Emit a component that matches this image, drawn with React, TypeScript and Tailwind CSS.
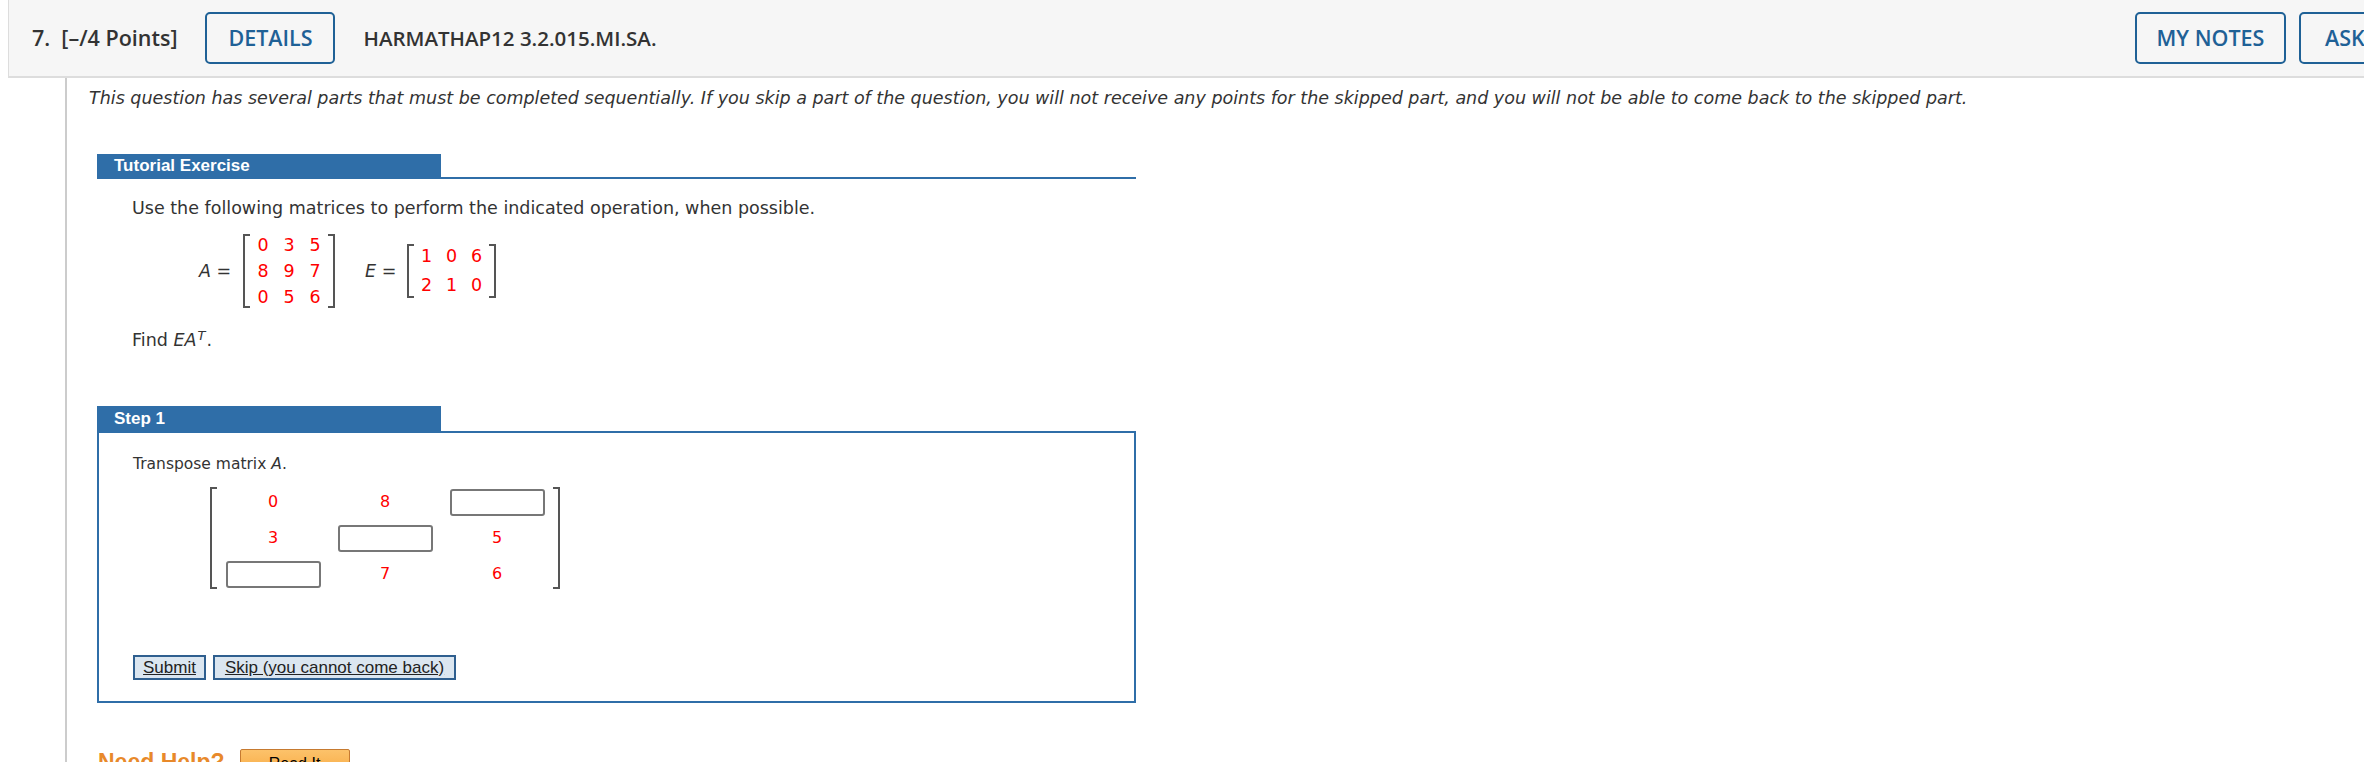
const blue = "bg-[#2f6ea8]";

function Bracket({ side }: { side: "l" | "r" }) {
  return (
    <div
      className={
        side === "l"
          ? "w-[7px] self-stretch my-[2px] border-l-2 border-y-2 border-[#555]"
          : "w-[7px] self-stretch my-[2px] border-r-2 border-y-2 border-[#555]"
      }
    />
  );
}

function SmallMatrix({ rows, rowH, colW }: { rows: string[][]; rowH: string; colW: string }) {
  return (
    <div className="flex">
      <Bracket side="l" />
      <div>
        {rows.map((r, i) => (
          <div key={i} className={`flex ${rowH}`}>
            {r.map((v, j) => (
              <div key={j} className={`${colW} flex items-center justify-center text-[#ff0000]`}>
                {v}
              </div>
            ))}
          </div>
        ))}
      </div>
      <Bracket side="r" />
    </div>
  );
}

function Blank() {
  return <div className="h-[27px] w-[95px] rounded-[3px] border-2 border-[#777] bg-white" />;
}

export default function App() {
  const cells: (string | null)[][] = [
    ["0", "8", null],
    ["3", null, "5"],
    [null, "7", "6"],
  ];

  return (
    <div className="h-[762px] w-[2364px] overflow-hidden bg-white font-['DejaVu_Sans',sans-serif] text-[#333]">
      {/* question header */}
      <div className="ml-[8px] flex h-[78px] items-center overflow-hidden border-b-2 border-l border-[#ddd] bg-[#f6f6f6] font-['Open_Sans',sans-serif]">
        <div className="flex min-w-0 flex-1 items-center pl-[23px]">
          <span className="text-[21.5px] font-semibold text-[#333]">7.&nbsp; [–/4 Points]</span>
          <button className="ml-[28px] h-[52px] w-[130px] rounded-[5px] border-2 border-[#1f6196] text-[21.5px] font-semibold text-[#1f6196]">
            DETAILS
          </button>
          <span className="ml-[28px] text-[20.5px] font-semibold text-[#333]">HARMATHAP12 3.2.015.MI.SA.</span>
        </div>
        <div className="flex w-[229px] flex-none gap-[13px] overflow-hidden">
          <button className="h-[52px] w-[151px] flex-none rounded-[5px] border-2 border-[#1f6196] text-[21.5px] font-semibold text-[#1f6196]">
            MY NOTES
          </button>
          <button className="h-[52px] w-[240px] flex-none rounded-[5px] border-2 border-[#1f6196] pl-[24px] text-left text-[21.5px] font-semibold text-[#1f6196]">
            ASK YOUR TEACHER
          </button>
        </div>
      </div>

      {/* question body */}
      <div className="ml-[65px] h-[700px] border-l-2 border-[#ccc]">
        <p className="pl-[22px] pt-[9px] text-[17.5px] italic leading-[22px] text-[#333]">
          This question has several parts that must be completed sequentially. If you skip a part of the question, you will not receive any points for the skipped part, and you will not be able to come back to the skipped part.
        </p>

        <div className="ml-[30px] mt-[45px] w-[1039px]">
          <div className="flex border-b-2 border-[#2f6ea8]">
            <div className={`${blue} h-[23px] w-[344px] pl-[17px] font-['Liberation_Sans',sans-serif] text-[17px] font-bold leading-[24px] text-white`}>
              Tutorial Exercise
            </div>
          </div>

          <div className="pl-[35px] text-[17.5px]">
            <p className="mt-[18px] leading-[22px]">Use the following matrices to perform the indicated operation, when possible.</p>
            <div className="mt-[13px] flex items-center pl-[67px] text-[17.5px]">
              <span className="w-[41px]"><i>A</i> =</span>
              <div className="ml-[3px]">
                <SmallMatrix
                  rows={[["0", "3", "5"], ["8", "9", "7"], ["0", "5", "6"]]}
                  rowH="h-[26px]"
                  colW="w-[26px]"
                />
              </div>
              <span className="ml-[30px] w-[36px]"><i>E</i> =</span>
              <div className="ml-[6px]">
                <SmallMatrix rows={[["1", "0", "6"], ["2", "1", "0"]]} rowH="h-[29px]" colW="w-[25px]" />
              </div>
            </div>
            <p className="mt-[19px] leading-[22px]">
              Find <i>EA</i>
              <sup className="relative -top-[6px] ml-[1px] text-[13px]"><i>T</i></sup>
              <span className="ml-[1px]">.</span>
            </p>
          </div>

          {/* step 1 */}
          <div className="mt-[55px]">
            <div className={`${blue} h-[25px] w-[344px] pl-[17px] font-['Liberation_Sans',sans-serif] text-[17px] font-bold leading-[26px] text-white`}>
              Step 1
            </div>
            <div className="h-[272px] border-2 border-[#2f6ea8] pl-[34px] pt-[21px]">
              <p className="text-[15.5px] leading-[20px]">
                Transpose matrix <i>A</i>.
              </p>
              <div className="ml-[77px] mt-[10px] flex w-fit text-[16px]">
                <div className="my-[3px] w-[7px] border-y-2 border-l-2 border-[#555]" />
                <div className="grid grid-cols-[repeat(3,112px)] auto-rows-[36px]">
                  {cells.flat().map((c, i) => (
                    <div key={i} className="flex items-center justify-center text-[#ff0000]">
                      {c === null ? <Blank /> : c}
                    </div>
                  ))}
                </div>
                <div className="my-[3px] w-[7px] border-y-2 border-r-2 border-[#555]" />
              </div>
              <div className="mt-[63px] flex gap-[7px] font-['Liberation_Sans',sans-serif] text-[17px] text-[#222]">
                <button className="h-[25px] w-[73px] border-2 border-[#2f5f8f] bg-[#dbe6f0] leading-[20px] underline">Submit</button>
                <button className="h-[25px] w-[243px] border-2 border-[#2f5f8f] bg-[#dbe6f0] leading-[20px] underline">Skip (you cannot come back)</button>
              </div>
            </div>
          </div>
        </div>

        {/* need help */}
        <div className="ml-[31px] mt-[46px] flex items-start gap-[15px] font-['Liberation_Sans',sans-serif]">
          <span className="-mt-[2px] text-[23px] font-bold leading-[30px] text-[#e8892a]">Need Help?</span>
          <button className="h-[30px] w-[110px] rounded-[2px] border border-[#c67a30] bg-gradient-to-b from-[#fcc26a] to-[#f7a73a] text-[16px] text-black">
            Read It
          </button>
        </div>
      </div>
    </div>
  );
}
